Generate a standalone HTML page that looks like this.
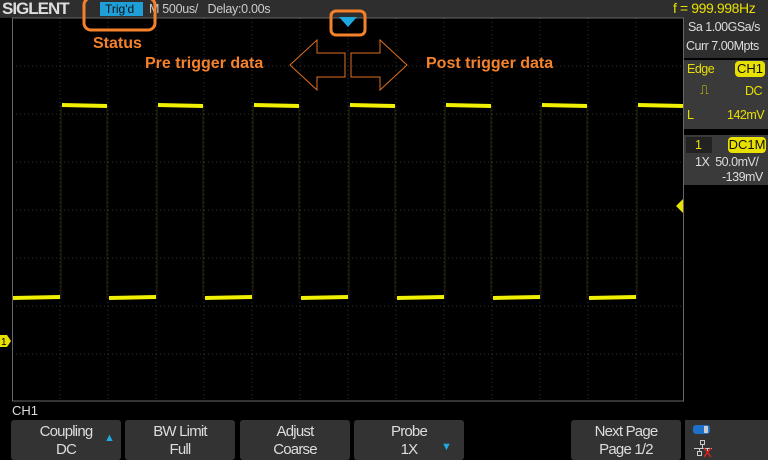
<!DOCTYPE html>
<html><head><style>
*{margin:0;padding:0;box-sizing:border-box}
body{width:768px;height:472px;background:#000;position:relative;overflow:hidden;font-family:"Liberation Sans",sans-serif;}
.a{position:absolute}
.btn{position:absolute;top:420px;height:40px;background:#333;border-radius:3px;color:#ddd;font-size:15px;text-align:center;line-height:18px;padding-top:3px;letter-spacing:-0.8px}
.rp{color:#ddd;font-size:12.5px;letter-spacing:-0.5px}
.or{color:#f5822a;font-weight:bold;font-size:16px}
</style></head><body>
<div class="a" style="left:0;top:0;width:768px;height:18px;background:#2e2e2e"></div>
<div class="a" style="left:2px;top:-1px;color:#ddd;font-weight:900;font-size:17px;letter-spacing:-1px">SIGLENT</div>
<div class="a" style="left:100px;top:2px;width:43px;height:14px;background:#1e9fd8;color:#111;font-size:12px;line-height:14px;padding-left:5px">Trig'd</div>
<div class="a" style="left:149px;top:2px;color:#ccc;font-size:12.5px;letter-spacing:-0.3px">M 500us/&nbsp;&nbsp; Delay:0.00s</div>
<div class="a" style="left:673px;top:0px;color:#e8e000;font-size:14px;letter-spacing:-0.4px">f = 999.998Hz</div>
<svg class="a" style="left:0;top:0" width="768" height="472">
<g stroke="#333" stroke-width="1" stroke-dasharray="1 3">
<line x1="12" y1="66" x2="683" y2="66"/><line x1="12" y1="114" x2="683" y2="114"/><line x1="12" y1="162" x2="683" y2="162"/><line x1="12" y1="210" x2="683" y2="210"/><line x1="12" y1="258" x2="683" y2="258"/><line x1="12" y1="306" x2="683" y2="306"/><line x1="12" y1="354" x2="683" y2="354"/>
<line x1="60" y1="18" x2="60" y2="401"/><line x1="108" y1="18" x2="108" y2="401"/><line x1="156" y1="18" x2="156" y2="401"/><line x1="204" y1="18" x2="204" y2="401"/><line x1="252" y1="18" x2="252" y2="401"/><line x1="300" y1="18" x2="300" y2="401"/><line x1="348" y1="18" x2="348" y2="401"/><line x1="396" y1="18" x2="396" y2="401"/><line x1="444" y1="18" x2="444" y2="401"/><line x1="492" y1="18" x2="492" y2="401"/><line x1="540" y1="18" x2="540" y2="401"/><line x1="588" y1="18" x2="588" y2="401"/><line x1="636" y1="18" x2="636" y2="401"/>
</g>
<rect x="12.5" y="18" width="671" height="383" fill="none" stroke="#666" stroke-width="1"/>
<g stroke="#262606" stroke-width="1">
<line x1="61" y1="105" x2="61" y2="298"/><line x1="107" y1="105" x2="107" y2="298"/><line x1="157" y1="105" x2="157" y2="298"/><line x1="203" y1="105" x2="203" y2="298"/><line x1="253" y1="105" x2="253" y2="298"/><line x1="299" y1="105" x2="299" y2="298"/><line x1="349" y1="105" x2="349" y2="298"/><line x1="395" y1="105" x2="395" y2="298"/><line x1="445" y1="105" x2="445" y2="298"/><line x1="491" y1="105" x2="491" y2="298"/><line x1="541" y1="105" x2="541" y2="298"/><line x1="587" y1="105" x2="587" y2="298"/><line x1="637" y1="105" x2="637" y2="298"/>
</g>
<g stroke="#f0f000" stroke-width="4">
<line x1="62" y1="105" x2="107" y2="106"/><line x1="158" y1="105" x2="203" y2="106"/><line x1="254" y1="105" x2="299" y2="106"/><line x1="350" y1="105" x2="395" y2="106"/><line x1="446" y1="105" x2="491" y2="106"/><line x1="542" y1="105" x2="587" y2="106"/><line x1="638" y1="105" x2="683" y2="106"/>
<line x1="13" y1="298" x2="60" y2="297"/><line x1="109" y1="298" x2="156" y2="297"/><line x1="205" y1="298" x2="252" y2="297"/><line x1="301" y1="298" x2="348" y2="297"/><line x1="397" y1="298" x2="444" y2="297"/><line x1="493" y1="298" x2="540" y2="297"/><line x1="589" y1="298" x2="636" y2="297"/>
</g>
<polygon points="0,335 7,335 11,341 7,347 0,347" fill="#e8e000"/>
<text x="1" y="345" font-size="10" font-family="Liberation Sans" fill="#000">1</text>
<polygon points="683,199 683,213 676,206" fill="#e8e000"/>
<rect x="331" y="11" width="34" height="24" rx="5" fill="none" stroke="#f5822a" stroke-width="3"/>
<polygon points="339,17 357,17 348,27" fill="#1ea8e0"/>
<rect x="84" y="-2" width="71" height="32" rx="7" fill="none" stroke="#f5822a" stroke-width="3"/>
<g fill="none" stroke="#e07020" stroke-width="1">
<polygon points="290,65 317,40 317,53 345,53 345,77 317,77 317,90"/>
<polygon points="407,65 380,40 380,53 351,53 351,77 380,77 380,90"/>
</g>
<rect x="684" y="18" width="84" height="40" fill="#2e2e2e"/>
<rect x="684" y="60" width="84" height="69" fill="#3a3a3a"/>
<rect x="684" y="135" width="84" height="50" fill="#3a3a3a"/>
<rect x="686" y="137" width="26" height="16" fill="#222"/>
<rect x="0" y="460" width="768" height="12" fill="#fff"/>
<rect x="685" y="420" width="83" height="40" fill="#333"/>
<rect x="693" y="425" width="17" height="9" rx="3" fill="#1e70c8"/>
<rect x="704" y="426" width="4" height="7" fill="#ccc"/>
<g stroke="#ccc" fill="none" stroke-width="1"><rect x="700.5" y="440.5" width="4" height="4"/><line x1="702.5" y1="445" x2="702.5" y2="448"/><line x1="694" y1="448.5" x2="712" y2="448.5"/><rect x="697.5" y="451.5" width="4" height="4"/><line x1="699.5" y1="448" x2="699.5" y2="451"/><line x1="707.5" y1="448" x2="707.5" y2="451"/></g>
<g stroke="#d02020" stroke-width="1.5"><line x1="704" y1="448" x2="711" y2="457"/><line x1="711" y1="448" x2="704" y2="457"/></g>
</svg>
<div class="a or" style="left:93px;top:35px">Status</div>
<div class="a or" style="left:145px;top:55px">Pre trigger data</div>
<div class="a or" style="left:426px;top:55px">Post trigger data</div>
<div class="a rp" style="left:688px;top:20px">Sa 1.00GSa/s</div>
<div class="a rp" style="left:686px;top:39px">Curr 7.00Mpts</div>
<div class="a rp" style="left:687px;top:62px;color:#e8e000">Edge</div>
<div class="a" style="left:735px;top:61px;width:30px;height:16px;background:#e8e000;border-radius:4px;color:#111;font-size:13px;text-align:center;line-height:16px">CH1</div>
<div class="a rp" style="left:700px;top:83px;color:#e8e000">⎍</div>
<div class="a rp" style="left:745px;top:84px;color:#e8e000">DC</div>
<div class="a rp" style="left:687px;top:108px;color:#e8e000">L</div>
<div class="a rp" style="left:727px;top:108px;color:#e8e000">142mV</div>
<div class="a rp" style="left:695px;top:138px;color:#e8e000">1</div>
<div class="a" style="left:728px;top:137px;width:38px;height:16px;background:#e8e000;border-radius:4px;color:#111;font-size:13px;text-align:center;line-height:16px">DC1M</div>
<div class="a rp" style="left:695px;top:155px">1X&nbsp; 50.0mV/</div>
<div class="a rp" style="left:722px;top:170px">-139mV</div>
<div class="a" style="left:12px;top:403px;color:#ddd;font-size:13px">CH1</div>
<div class="btn" style="left:11px;width:110px">Coupling<br>DC<span class="a" style="left:93px;top:9px;color:#1ea8e0;font-size:11px">▲</span></div>
<div class="btn" style="left:125px;width:110px">BW Limit<br>Full</div>
<div class="btn" style="left:240px;width:110px">Adjust<br>Coarse</div>
<div class="btn" style="left:354px;width:110px">Probe<br>1X<span class="a" style="left:87px;top:18px;color:#1ea8e0;font-size:11px">▼</span></div>
<div class="btn" style="left:571px;width:110px">Next Page<br>Page 1/2</div>
</body></html>
